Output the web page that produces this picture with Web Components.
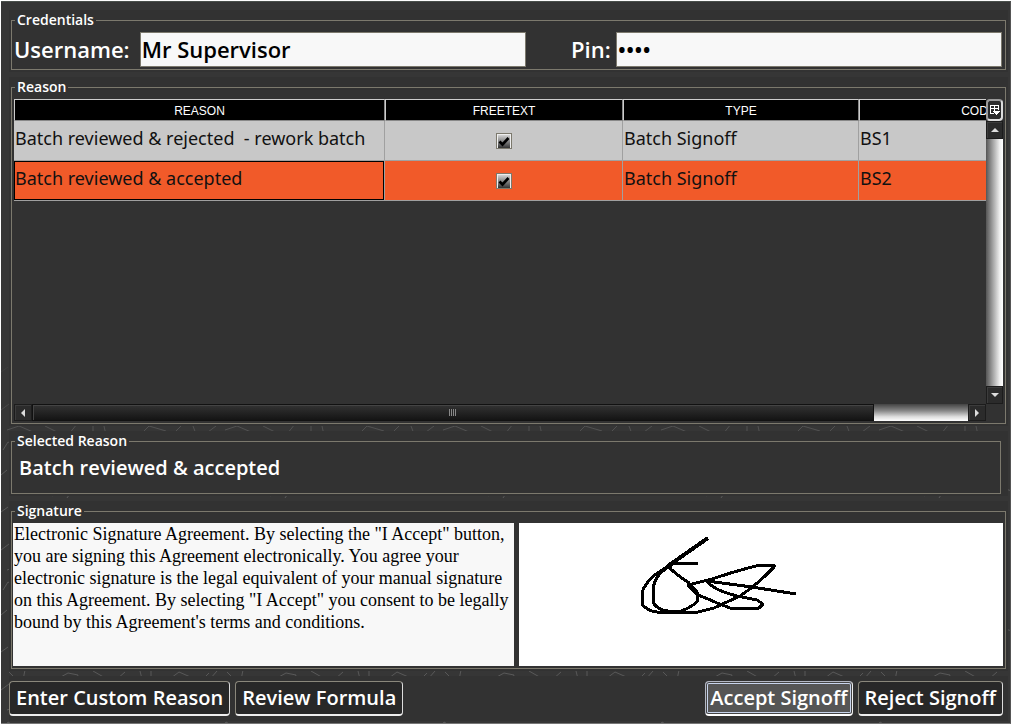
<!DOCTYPE html>
<html lang="en">
<head>
<meta charset="utf-8">
<title>Batch Signoff</title>
<style>
  body { margin: 0; background: #fff; font-family: "Open Sans", "Noto Sans", sans-serif; }
</style>
</head>
<body>
<signoff-dialog></signoff-dialog>

<template id="t-dialog">
  <style>
    * { box-sizing: border-box; }
    :host { display: block; padding: 1px; }
    .window {
      display: grid; grid-template-rows: auto 1fr auto auto auto; gap: 5px;
      min-height: calc(100vh - 2px); padding: 8px 2px 2px 8px; position: relative;
      background: #363636; border-top: 1px solid #4a504c; border-bottom: 1px solid #777;
      border-right: 1px solid #555; color: #fff;
    }
    .doodle { position: absolute; inset: 0; width: 100%; height: 100%; }
    .window > :not(.doodle) { position: relative; }
    .creds { display: flex; gap: 45px; padding-right: 1px; }
    .creds > * { flex: 1 1 auto; }
    .selected { margin: 0; padding: 2px 5px 10px; font-size: 20px; line-height: 26px; font-weight: 600; }
    .sign { display: grid; grid-template-columns: 501px 1fr; gap: 5px; min-height: 143px; margin-left: -1px; }
    .sign p { margin: 0; padding: 0 1px; background: #f8f8f8; color: #000;
      font: 18px/22px "Liberation Serif", serif; }
    .bar { display: flex; gap: 5px; padding: 5px 5px 5px 0; background: #323232; }
    .space { flex: 1; }
  </style>
  <div class="window">
    <svg class="doodle" aria-hidden="true">
      <defs>
        <pattern id="d" width="218" height="140" y="78" patternUnits="userSpaceOnUse">
          <g fill="none" stroke="#585858" stroke-width="1">
            <path d="M6 70l12-4 14 6M44 66l12 6M76 64l-8 10M92 66v8M103 66l2 9M140 74l8-8 17 5M172 74l8-8M192 66l3 8M207 72l8-6"/>
            <path d="M10 133l9-5 12 4M38 126l14 10M74 126l-8 12M90 128v8M122 134l7-6 20 6M160 136l8-8M175 128l18 5M205 128l3 8"/>
            <path d="M8 32l8 8M24 30l-2 10M58 38l9-5 10 2-2 6M92 31l14 8M124 32l-8 7M139 31l2 8M150 31v8M170 38l8-6 16 7M202 39l6-6M216 31l-7 8"/>
            <path d="M0 12l7-5M0 50l8-6M2 90l5-8 5 3M0 115l6-5M212 18l4 6M215 100l3 8M211 55l6-6"/>
          </g>
        </pattern>
        <linearGradient id="f" x2="0" y2="1"><stop offset=".48" stop-color="#000"/><stop offset=".62" stop-color="#fff"/></linearGradient>
        <mask id="m"><rect width="100%" height="100%" fill="url(#f)"/></mask>
      </defs>
      <rect width="100%" height="100%" fill="url(#d)" mask="url(#m)"/>
    </svg>
    <group-panel caption="Credentials">
      <div class="creds">
        <credential-field label="Username:" value="Mr Supervisor" gap="wide"></credential-field>
        <credential-field label="Pin:" value="1234" type="password"></credential-field>
      </div>
    </group-panel>
    <group-panel caption="Reason"><reason-table></reason-table></group-panel>
    <group-panel caption="Selected Reason" inset>
      <p class="selected">Batch reviewed &amp; accepted</p>
    </group-panel>
    <group-panel caption="Signature">
      <div class="sign">
        <p>Electronic Signature Agreement. By selecting the "I Accept" button, you are signing this Agreement electronically. You agree your electronic signature is the legal equivalent of your manual signature on this Agreement. By selecting "I Accept" you consent to be legally bound by this Agreement's terms and conditions.</p>
        <signature-pad></signature-pad>
      </div>
    </group-panel>
    <div class="bar">
      <action-button>Enter Custom Reason</action-button>
      <action-button>Review Formula</action-button>
      <span class="space"></span>
      <action-button primary>Accept Signoff</action-button>
      <action-button>Reject Signoff</action-button>
    </div>
  </div>
</template>

<template id="t-panel">
  <style>
    :host { display: flex; background: #323232; padding: 0 2px 2px; }
    :host([inset]) { padding-right: 7px; }
    fieldset { flex: 1; min-width: 0; margin: 0; padding: 2px; border: 1px solid #7c796d; display: flex; flex-direction: column; }
    legend { margin-left: 1px; padding: 0 2px; font-size: 14px; line-height: 20px; font-weight: 600; }
    .body { flex: 1; display: grid; }
  </style>
  <fieldset><legend></legend><div class="body"><slot></slot></div></fieldset>
</template>

<template id="t-field">
  <style>
    :host { display: flex; align-items: center; gap: 5px; }
    :host([gap]) { gap: 10px; }
    label { padding-bottom: 2px; font-size: 22px; line-height: 30px; font-weight: 600; }
    input { box-sizing: border-box; flex: 1; width: 0; min-width: 0; height: 35px; margin: 0; padding: 0 1px 2px;
      border: 1px solid #7c796d; background: #f8f8f8; color: #000; border-radius: 0; outline: 0;
      font: 600 22px/30px "Open Sans", "Noto Sans", sans-serif; }
  </style>
  <label for="i"></label><input id="i">
</template>

<template id="t-table">
  <style>
    :host { display: grid; grid-template-columns: minmax(0, 1fr) 17px; grid-template-rows: minmax(305px, 1fr) 17px; }
    .view { overflow: hidden; }
    .side { display: flex; flex-direction: column; }
    table { width: 1084px; table-layout: fixed; border-collapse: separate; border-spacing: 0; }
    col.reason { width: 371px; } col.free { width: 238px; } col.type { width: 236px; } col.code { width: 239px; }
    th { box-sizing: border-box; height: 22px; padding: 2px 0 0; background: #000; font: 12px/16px "Liberation Sans", sans-serif;
      border: 1px solid; border-color: #ccc #888 #888 #ccc; }
    td { box-sizing: border-box; height: 40px; padding: 0 1px 5px; color: #111; background: #c8c8c8;
      font: 18px/24px "Noto Sans", sans-serif; white-space: pre;
      border: solid #a0a0a0; border-width: 0 1px 1px 0; }
    td.free { padding: 0; }
    .on td { background: #f15a29; }
    .on td:first-child { box-shadow: inset 0 0 0 1px #000; }
    input { appearance: none; display: block; width: 16px; height: 16px; margin: 0 auto; border: 1px solid #7c796d;
      box-shadow: inset 1px 1px #eee, inset -1px 0 #eee; background: linear-gradient(#ddd, #444); }
    input:checked { background:
      url("data:image/svg+xml,%3Csvg xmlns='http://www.w3.org/2000/svg' viewBox='0 0 14 14'%3E%3Cpath d='M2.500 7.500L5.500 10.500L11.500 4' fill='none' stroke='%23000' stroke-width='2.600'/%3E%3C/svg%3E"),
      linear-gradient(#e0e0e0, #333); }
    .pick { box-sizing: border-box; width: 17px; height: 22px; padding: 0; border: 2px solid #ddd; border-left-color: #999;
      border-top-color: #999; border-radius: 4px; background: #2a2a2a; display: grid; place-items: center; }
    scroll-strip { flex: 1; }
  </style>
  <div class="view">
    <table>
      <colgroup><col class="reason"><col class="free"><col class="type"><col class="code"></colgroup>
      <thead><tr><th>REASON</th><th>FREETEXT</th><th>TYPE</th><th>CODE</th></tr></thead>
      <tbody>
        <tr><td>Batch reviewed &amp; rejected  - rework batch</td><td class="free"><input type="checkbox" checked aria-label="Free text, BS1"></td><td>Batch Signoff</td><td>BS1</td></tr>
        <tr class="on"><td>Batch reviewed &amp; accepted</td><td class="free"><input type="checkbox" checked aria-label="Free text, BS2"></td><td>Batch Signoff</td><td>BS2</td></tr>
      </tbody>
    </table>
  </div>
  <div class="side">
    <button class="pick" aria-label="Choose columns">
      <svg width="11" height="12" viewBox="0 0 11 12" fill="none" stroke="#fff" shape-rendering="crispEdges"><path d="M5 9.500H1.500V1.500H9.500V6M1 4.500h9M5.500 1v7"/><path d="M4 7h7v1h-1v1h-1v1h-1v1h-1v-1h-1v-1h-1v-1h-1z" fill="#fff" stroke="none"/></svg>
    </button>
    <scroll-strip vertical></scroll-strip>
  </div>
  <scroll-strip></scroll-strip>
</template>

<template id="t-scroll">
  <style>
    :host { display: flex; background: linear-gradient(#444, #888 40%, #ddd 75%, #fff); }
    :host([vertical]) { flex-direction: column; background: linear-gradient(90deg, #555, #999 35%, #eee 80%, #fff); }
    button { box-sizing: border-box; width: 18px; height: 17px; padding: 0; border: 1px solid #1c1c1c; background: #2b2b2b;
      box-shadow: inset 1px 1px #3c3c3c; display: grid; place-items: center; }
    :host([vertical]) button { width: 17px; height: 18px; }
    .thumb { flex: 0 0 88%; max-width: calc(90% - 33px); box-sizing: border-box; border: 1px solid #111; box-shadow: inset 1px 1px #444;
      background: linear-gradient(#333, #141414); display: grid; place-items: center; }
    .grip { width: 7px; height: 7px; background: repeating-linear-gradient(90deg, #888 0 1px, #222 1px 2px); }
    .track { flex: 1; }
    :host([vertical]) .thumb { display: none; }
    svg { fill: #ddd; }
    :host([vertical]) svg { transform: rotate(90deg); }
  </style>
  <button aria-label="Scroll back"><svg width="8" height="8"><path d="M6 0v8L2 4z"/></svg></button>
  <div class="thumb"><div class="grip"></div></div>
  <div class="track"></div>
  <button aria-label="Scroll forward"><svg width="8" height="8"><path d="M2 0v8l4-4z"/></svg></button>
</template>

<template id="t-pad">
  <style>
    :host { display: block; background: #fff; }
    svg { display: block; }
  </style>
  <svg width="300" height="143" viewBox="519 523 300 143" fill="none" stroke="#000" stroke-width="3" stroke-linejoin="round" shape-rendering="crispEdges" role="img" aria-label="Signature">
    <path d="M708 538L668 566" stroke-width="4"/>
    <path d="M698 563H674L660 573Q653 583 653 590V602Q655 607 663 610Q670 612 681 611Q690 608 697 602V592L688 582Q675 574 668 566"/>
    <path d="M670 565L656 574Q646 582 642 592V604Q647 611 657 612H698L714 608L740 596Q757 585 774 567V565H760Q742 569 712 579L688 585L698 595Q711 600 717 603L730 608H759L763 604L757 600L737 596Q713 590 707 581L752 587L796 594"/>
  </svg>
</template>

<template id="t-button">
  <style>
    :host { display: block; }
    button { box-sizing: border-box; height: 35px; margin: 0; padding: 0 6px; border: solid; white-space: nowrap;
      border-color: #8a877b #ddd #eee #8a877b; border-width: 1px 1px 2px; border-radius: 4px; background: #282828; color: #fff;
      font: 600 20px/30px "Open Sans", "Noto Sans", sans-serif; }
    :host([primary]) button { padding: 0 4px; background: #555; box-shadow: inset 0 0 0 1px #444, inset 0 0 0 2px #c8d4ec; border-color: #b4b8c4 #eee #fff #b4b8c4; }
  </style>
  <button><slot></slot></button>
</template>

<script>
  const define = (name, template, setup) => customElements.define(name, class extends HTMLElement {
    constructor() {
      super();
      this.attachShadow({ mode: "open" }).append(document.getElementById(template).content.cloneNode(true));
    }
    connectedCallback() { if (setup) setup(this, this.shadowRoot); }
  });
  define("group-panel", "t-panel", (el, root) => {
    root.querySelector("legend").textContent = el.getAttribute("caption");
  });
  define("credential-field", "t-field", (el, root) => {
    root.querySelector("label").textContent = el.getAttribute("label");
    const input = root.querySelector("input");
    input.type = el.getAttribute("type") || "text";
    input.value = el.getAttribute("value");
  });
  define("scroll-strip", "t-scroll");
  define("reason-table", "t-table");
  define("signature-pad", "t-pad");
  define("action-button", "t-button");
  define("signoff-dialog", "t-dialog");
</script>
</body>
</html>
